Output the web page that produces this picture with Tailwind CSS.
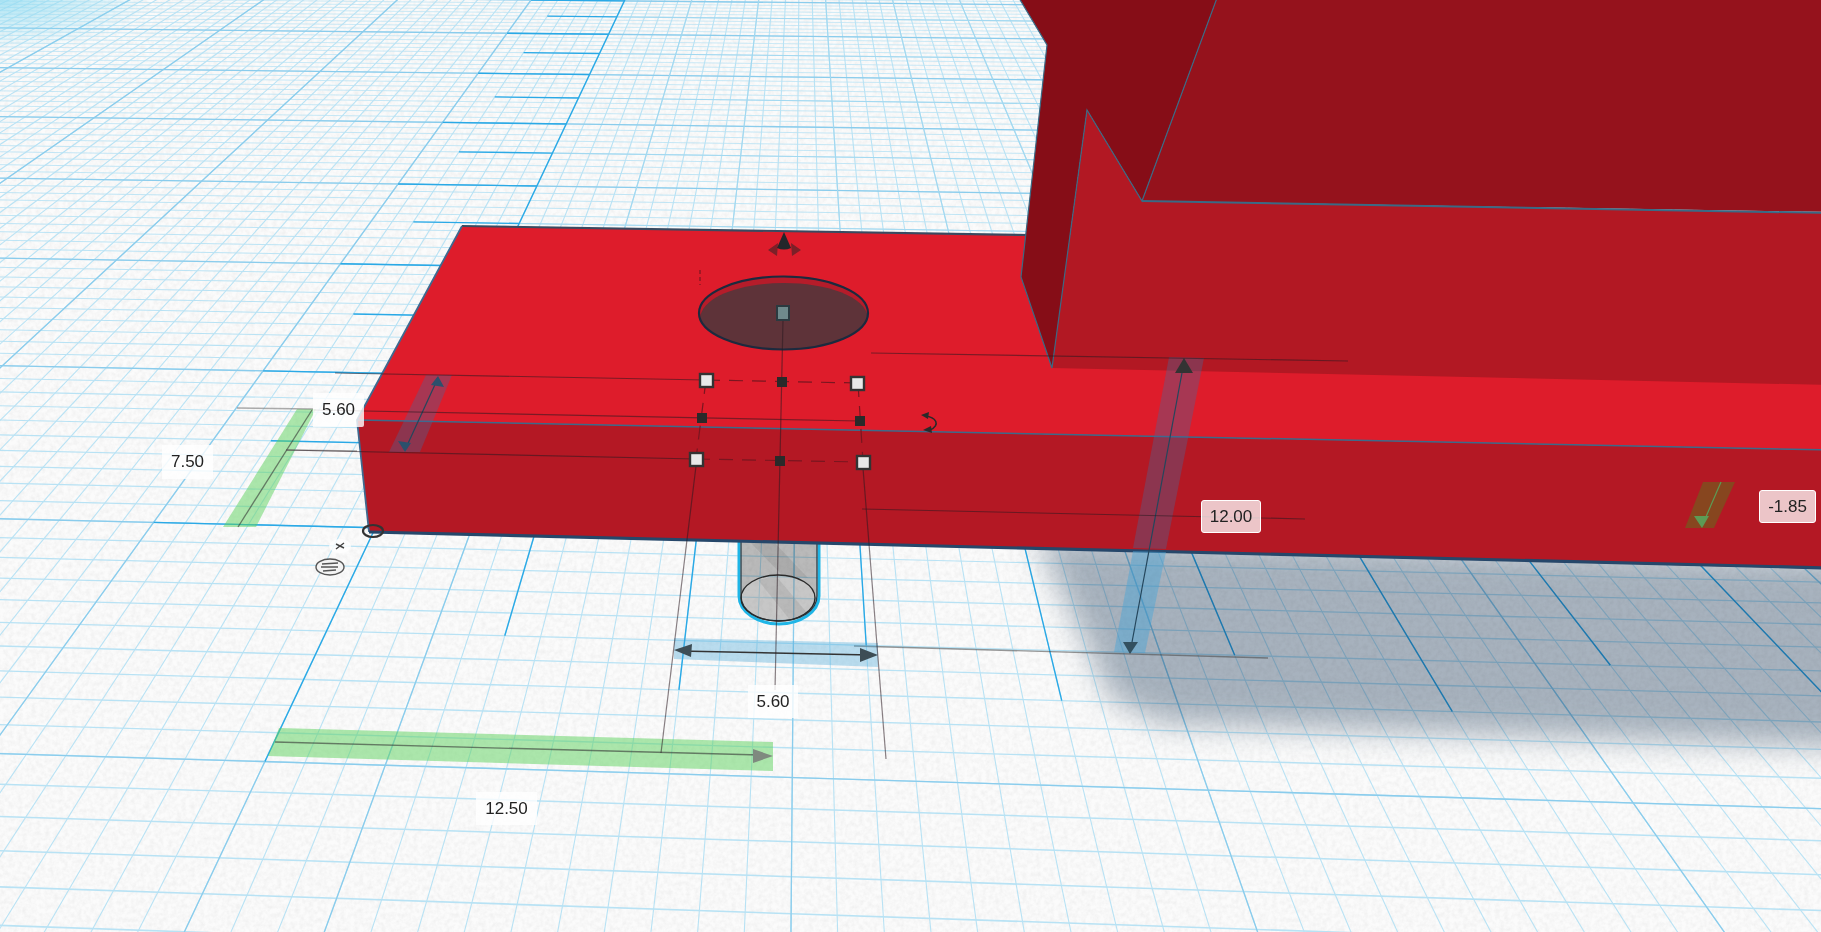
<!DOCTYPE html>
<html lang="en">
<head>
    <meta charset="UTF-8">
    <title>Workplane</title>
    <script src="https://cdn.jsdelivr.net/npm/@tailwindcss/browser@4"></script>
</head>
<body class="bg-[#fbfbfb]">
    <div class="relative w-[1821px] h-[932px] overflow-hidden bg-[#fbfbfb] font-['Liberation_Sans',Arial,sans-serif] text-[17px] text-[#222]">
        <svg class="absolute inset-0" width="1821" height="932" viewBox="0 0 1821 932" fill="none">
            <defs>
                <filter id="noise" x="0" y="0" width="100%" height="100%">
                    <feTurbulence type="fractalNoise" baseFrequency="0.22" numOctaves="3" seed="4"/>
                    <feColorMatrix values="0 0 0 0 0.5  0 0 0 0 0.5  0 0 0 0 0.5  0.3 0 0 0 -0.1"/>
                </filter>
                <filter id="soft" x="-20%" y="-20%" width="140%" height="140%">
                    <feGaussianBlur stdDeviation="15"/>
                </filter>
                <radialGradient id="fog" cx="0" cy="0" r="1">
                    <stop offset="0" stop-color="#8fdcf2" stop-opacity=".7"/>
                    <stop offset="1" stop-color="#8fdcf2" stop-opacity="0"/>
                </radialGradient>
            </defs>

            <rect width="1821" height="932" filter="url(#noise)"/>
            <g id="grid"></g>
            <rect width="150" height="50" fill="url(#fog)"/>

            <!-- shadow of the block -->
            <path d="M1035 535 L1860 560 L1860 748 L1165 724 L1112 700 Z" fill="#8c9bab" opacity=".74" filter="url(#soft)" style="mix-blend-mode:multiply"/>

            <!-- green width / depth bands on the ground -->
            <path d="M279 728 L773 742 L773 771 L268 756 Z" fill="#5cd25c" fill-opacity=".5"/>
            <path d="M297 409 L316 409 L256 527 L223 527 Z" fill="#5cd25c" fill-opacity=".5"/>
            <path d="M275 742 L760 755" stroke="#333" stroke-opacity=".6" stroke-width="1.3"/>
            <path d="M753 749 L773 756 L753 763 Z" fill="#7f8a7f"/>
            <path d="M312 410 L238 527" stroke="#333" stroke-opacity=".6" stroke-width="1.3"/>
            <path d="M237 408 L313 409" stroke="#777" stroke-opacity=".6" stroke-width="1.5"/>
            <path d="M286 450 L357 451" stroke="#777" stroke-opacity=".6" stroke-width="1.5"/>

            <!-- cylinder under the plate, see-through -->
            <path d="M741 540 L741 596 C741 611 758 621 779 621 C800 621 817 611 817 596 L817 540 Z" fill="#000" fill-opacity=".26"/>
            <path d="M748 540 L772 540 L808 578 L782 575 Z" fill="#000" fill-opacity=".07"/>
            <ellipse cx="778" cy="598" rx="37" ry="23" fill="#fff" fill-opacity=".2"/>
            <path d="M758 580 L776 576 L808 614 L790 620 Z" fill="#000" fill-opacity=".07"/>
            <path d="M739 540 L739 596 C739 612 758 624 779 624 C800 624 819 612 819 596 L819 540" stroke="#1fb5e6" stroke-width="3"/>
            <path d="M741 540 L741 596 C741 611 758 621 779 621 C800 621 817 611 817 596 L817 540" stroke="#2a3a44" stroke-width="1.3"/>
            <ellipse cx="778" cy="598" rx="37" ry="23" stroke="#2a2a2a" stroke-width="1.4"/>

            <!-- plate -->
            <path d="M462 226 L1830 249 L1830 450 L357 420 Z" fill="#de1c2b"/>
            <path d="M357 420 L1830 450 L1830 569 L369 532 Z" fill="#b41824"/>
            <path d="M462 226 L1030 235" stroke="#3a4a60" stroke-width="2.2"/>
            <path d="M462 226 L357 420 L369 532" stroke="#3f6a90" stroke-width="1.8"/>
            <path d="M357 420 L1830 450" stroke="#3c6a8a" stroke-width="1.5"/>
            <path d="M369 532 L1830 568" stroke="#26476a" stroke-width="3.2"/>

            <!-- block on top -->
            <path d="M1217 -2 L1830 -2 L1830 212 L1142 201 Z" fill="#95121c"/>
            <path d="M1019 -2 L1047 45 L1021 277 L1052 368 L1087 110 L1142 201 L1217 -2 Z" fill="#860d17"/>
            <path d="M1087 110 L1142 201 L1830 213 L1830 385 L1052 368 Z" fill="#b21823"/>
            <path d="M1019 -2 L1047 45 L1021 277 L1052 368 L1087 110 L1142 201 L1217 -2" stroke="#3a6a85" stroke-width="1.2"/>
            <path d="M1142 201 L1830 213" stroke="#3a6a85" stroke-width="2"/>

            <!-- height band and arrow -->
            <path d="M1169 357 L1204 358 L1166 549 L1133 548 Z" fill="#46699a" fill-opacity=".36"/>
            <path d="M1133 551 L1166 552 L1145 653 L1114 652 Z" fill="#46a5d7" fill-opacity=".45"/>
            <path d="M1184 362 L1130 653" stroke="#24465c" stroke-width="1.2"/>
            <path d="M1184 358 L1193 373 L1175 373 Z" fill="#333"/>
            <path d="M1130 654 L1123 642 L1138 642 Z" fill="#33505f"/>
            <path d="M854 646 L1268 658" stroke="#444" stroke-opacity=".55" stroke-width="1.3"/>

            <!-- plate thickness band -->
            <path d="M426 375 L452 375 L420 452 L389 452 Z" fill="#46699a" fill-opacity=".36"/>
            <path d="M438 378 L405 450" stroke="#24465c" stroke-width="1.2"/>
            <path d="M438 376 L444 387 L431 385 Z" fill="#2b506c"/>
            <path d="M405 452 L398 441 L411 443 Z" fill="#2b506c"/>

            <!-- elevation band -->
            <path d="M1703 482 L1735 482 L1714 528 L1685 528 Z" fill="#87461f"/>
            <path d="M1721 482 L1702 526" stroke="#5c9b55" stroke-width="1.2"/>
            <path d="M1702 528 L1694 516 L1709 516 Z" fill="#5c9b55"/>

            <!-- width band under cylinder -->
            <path d="M674 638 L878 643 L878 667 L674 659 Z" fill="#46a5d7" fill-opacity=".36"/>
            <path d="M680 651 L870 655" stroke="#333" stroke-width="1.3"/>
            <path d="M674 650 L692 644 L691 657 Z" fill="#3d4d55"/>
            <path d="M878 655 L860 648 L860 662 Z" fill="#3d4d55"/>

            <!-- hole top -->
            <ellipse cx="783.5" cy="313" rx="84.5" ry="36.5" fill="#b51c2a"/>
            <path d="M700 318 C702 296 742 283 784 283 C826 283 866 296 868 318 C860 338 825 349 784 349 C743 349 708 338 700 318 Z" fill="#5e3339"/>
            <ellipse cx="783.5" cy="313" rx="84.5" ry="36.5" stroke="#1c2a3e" stroke-width="2.2"/>

            <!-- guides -->
            <g stroke="#2a1a20" stroke-opacity=".55" stroke-width="1.2">
                <path d="M335 373 L706 380"/>
                <path d="M314 410 L860 421"/>
                <path d="M286 450 L696 459"/>
                <path d="M783 320 L775 690"/>
                <path d="M871 353 L1348 361"/>
                <path d="M862 509 L1305 519"/>
                <path d="M696 466 L661 753"/>
                <path d="M863 468 L886 759"/>
            </g>
            <g stroke="#7a1620" stroke-width="1.2" stroke-dasharray="14 9">
                <path d="M706 380 L858 383"/>
                <path d="M696 459 L863 462"/>
                <path d="M706 380 L696 459"/>
                <path d="M858 383 L863 462"/>
            </g>
            <path d="M700 270 L700 285" stroke="#7a1620" stroke-width="1.2" stroke-dasharray="4 3"/>

            <!-- handles -->
            <rect x="777" y="306" width="12" height="14" fill="#6f8a8c" stroke="#2b3a40" stroke-width="2"/>
            <g fill="#e9e9e9" stroke="#333" stroke-width="2.4">
                <rect x="700" y="374" width="13" height="13"/>
                <rect x="851" y="377" width="13" height="13"/>
                <rect x="690" y="453" width="13" height="13"/>
                <rect x="857" y="456" width="13" height="13"/>
            </g>
            <g fill="#2a2a2a">
                <rect x="777" y="377" width="10" height="10"/>
                <rect x="697" y="413" width="10" height="10"/>
                <rect x="855" y="416" width="10" height="10"/>
                <rect x="775" y="456" width="10" height="10"/>
            </g>

            <!-- lift arrow -->
            <path d="M768 250 L778 243 L777 256 Z M801 250 L791 243 L792 256 Z" fill="#7c2028"/>
            <path d="M784 232 L791 248 Q784 251 777 248 Z" fill="#23262a"/>

            <!-- rotate handle -->
            <path d="M925 416 C936 417 941 425 930 430" stroke="#2a2a2a" stroke-width="1.6"/>
            <path d="M921 415 L929 412 L928 419 Z M923 430 L931 426 L932 433 Z" fill="#2a2a2a"/>

            <!-- origin and ruler menu -->
            <ellipse cx="373" cy="531" rx="10" ry="6" stroke="#333" stroke-width="2.2"/>
            <ellipse cx="340" cy="546" rx="11" ry="7" fill="#fff" fill-opacity=".8"/>
            <path d="M336 549 L344 543 M336 544 L344 548" stroke="#444" stroke-width="1.4"/>
            <ellipse cx="330" cy="567" rx="14" ry="8" fill="#f4f4f4" stroke="#555" stroke-width="1.4"/>
            <path d="M322 564 L338 563 M321 567 L338 567 M323 571 L336 570" stroke="#555" stroke-width="1.4"/>
        </svg>

        <div class="absolute left-[313px] top-[393px] w-[51px] h-[34px] flex items-center justify-center bg-white/80 rounded-r-[2px]">5.60</div>
        <div class="absolute left-[162px] top-[445px] w-[51px] h-[34px] flex items-center justify-center bg-white/80">7.50</div>
        <div class="absolute left-[748px] top-[685px] w-[50px] h-[33px] flex items-center justify-center bg-white/80">5.60</div>
        <div class="absolute left-[476px] top-[792px] w-[61px] h-[33px] flex items-center justify-center bg-white/80">12.50</div>
        <div class="absolute left-[1201px] top-[500px] w-[60px] h-[33px] flex items-center justify-center bg-white/75 border border-white rounded-[3px]">12.00</div>
        <div class="absolute left-[1759px] top-[490px] w-[57px] h-[33px] flex items-center justify-center bg-white/75 border border-white rounded-[3px]">-1.85</div>
    </div>

    <script>
        // perspective grid: n = lines running to the far vanishing point, j = lines across
        const NS = 'http://www.w3.org/2000/svg';
        const grid = document.getElementById('grid');
        const FINE = '#b8e2f4', MID = '#8accec', LIGHT = '#a2d8f0', STRONG = '#2aa9e6';

        const x300 = n => 483 + 24.1 * n;
        const xAt = (n, y) => 802 + (x300(n) - 802) * (y + 375) / 675;
        const y0 = j => 1 / (0.000898 + j * 0.000024) - 360;
        const yAt = (j, x) => y0(j) + x * (y0(j) + 360) / 36800;

        // where line n crosses line j
        function cross(n, j) {
            let y = y0(j);
            for (let i = 0; i < 5; i++) y = yAt(j, xAt(n, y));
            return y;
        }

        function line(x1, y1, x2, y2, color, width) {
            const l = document.createElementNS(NS, 'line');
            l.setAttribute('x1', x1); l.setAttribute('y1', y1);
            l.setAttribute('x2', x2); l.setAttribute('y2', y2);
            l.setAttribute('stroke', color);
            l.setAttribute('stroke-width', width);
            grid.appendChild(l);
        }
        const vert = (n, a, b, color, width) => line(xAt(n, a), a, xAt(n, b), b, color, width);
        const horiz = (j, a, b, color, width) => line(a, yAt(j, a), b, yAt(j, b), color, width);

        const mod = (a, m) => ((a % m) + m) % m;

        // fine lines first, thicker nearer the camera
        for (let j = -5; j <= 84; j++) horiz(j, -10, 1830, FINE, 0.7 + Math.max(y0(j), 0) / 1000);
        for (let n = -90; n <= 120; n++) vert(n, -10, 940, FINE, 1.1);

        for (let j = 0; j <= 84; j += 5) {
            const edge = xAt(0, cross(0, j));
            if (j % 10 == 0) horiz(j, -10, 1830, MID, 1.3);
            else if (j > 10) horiz(j, edge, 1830, LIGHT, 1.1);
        }
        for (let n = -90; n <= 120; n++) {
            if (mod(n, 10) == 3) {
                if (n < 0) vert(n, -10, 940, MID, 1.3);
                else vert(n, cross(n, 10), 940, MID, 1.3);
            }
            if (n >= 0 && n % 5 == 0) {
                const end = n == 0 ? 0 : (n % 10 == 0 ? 3 : 5);
                if (n == 0) {
                    vert(n, -10, cross(n, end), STRONG, 1.4);
                    vert(n, cross(n, 0), 940, MID, 1.3);
                } else {
                    vert(n, -10, cross(n, 10), LIGHT, 1.1);
                    vert(n, cross(n, 10), cross(n, end), STRONG, 1.4);
                }
            }
        }
        // ruler ticks left of the plane
        for (let j = 10; j <= 84; j += 5) {
            const from = j % 10 == 0 ? -7 : -5;
            horiz(j, xAt(from, cross(from, j)), xAt(0, cross(0, j)), STRONG, 1.4);
        }
    </script>
</body>
</html>
